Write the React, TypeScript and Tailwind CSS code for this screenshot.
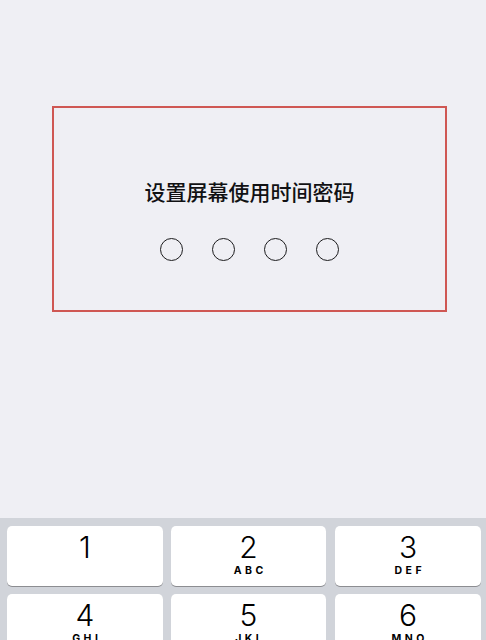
import React from "react";

const keys = [
  { d: "1", l: "" },
  { d: "2", l: "ABC" },
  { d: "3", l: "DEF" },
  { d: "4", l: "GHI" },
  { d: "5", l: "JKL" },
  { d: "6", l: "MNO" },
];

export default function App() {
  return (
    <div
      className="flex h-[640px] w-[486px] flex-col overflow-hidden bg-[#efeff4]"
      style={{ fontFamily: 'Inter, "Noto Sans CJK SC", sans-serif' }}
    >
      <div className="h-[518px] shrink-0 pt-[106px] pl-[52px]">
        <div className="flex h-[206px] w-[395px] flex-col items-center border-[2px] border-[#cf5753] pt-[71px]">
          <div
            className="text-[21px] font-medium leading-[25px] text-[#111113]"
            style={{ fontFamily: '"Noto Sans CJK SC", sans-serif' }}
          >
            设置屏幕使用时间密码
          </div>
          <div className="mt-[34px] flex gap-[29px]">
            {[0, 1, 2, 3].map((i) => (
              <div
                key={i}
                className="h-[23px] w-[23px] rounded-full border-[1.7px] border-[#1c1c1e]"
              />
            ))}
          </div>
        </div>
      </div>
      <div className="flex-1 bg-[#d1d4da] pt-[8px] pl-[7px]">
        <div className="grid grid-cols-[156px_155px_147px] gap-x-[8px] gap-y-[8px] [&>*:nth-child(3n)]:ml-[1px]">
          {keys.map((k) => (
            <div
              key={k.d}
              className="flex h-[60px] flex-col items-center rounded-[5px] bg-white pt-[6px] shadow-[0_1px_0_#8c8d91]"
            >
              <div className="text-[30px] font-light leading-[30px] text-black">
                {k.d}
              </div>
              {k.l && (
                <div className="mt-[4px] pl-[3.5px] text-[10.5px] font-bold leading-[10px] tracking-[3.5px] text-black">
                  {k.l}
                </div>
              )}
            </div>
          ))}
        </div>
      </div>
    </div>
  );
}
